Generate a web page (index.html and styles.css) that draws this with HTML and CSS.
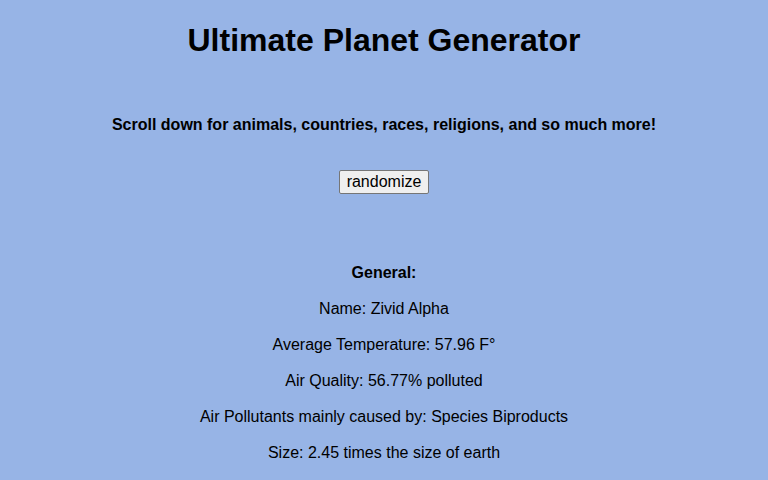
FILE: index.html
```html
<!DOCTYPE html>
<html lang="en">
<head>
<meta charset="utf-8">
<title>Ultimate Planet Generator</title>
<link rel="stylesheet" href="styles.css">
</head>
<body>
  <main class="page">
    <h1 class="title">Ultimate Planet Generator</h1>
    <p class="tagline">Scroll down for animals, countries, races, religions, and so much more!</p>
    <div class="actions">
      <button class="btn" type="button">randomize</button>
    </div>
    <section class="section">
      <h2 class="section-title">General:</h2>
      <p class="fact">Name: Zivid Alpha</p>
      <p class="fact">Average Temperature: 57.96 F°</p>
      <p class="fact">Air Quality: 56.77% polluted</p>
      <p class="fact">Air Pollutants mainly caused by: Species Biproducts</p>
      <p class="fact">Size: 2.45 times the size of earth</p>
    </section>
  </main>
</body>
</html>
```
FILE: styles.css
```css
html, body {
  margin: 0;
  padding: 0;
  background: #97b4e6;
}

body {
  font-family: "Liberation Sans", Arial, sans-serif;
  color: #000;
}

.page {
  display: flex;
  flex-direction: column;
  align-items: center;
  text-align: center;
}

.title {
  margin: 22px 0 0;
  font-size: 32px;
  line-height: 37px;
  font-weight: bold;
}

.tagline {
  margin: 57px 0 0;
  font-size: 16px;
  line-height: 18px;
  font-weight: bold;
}

.actions {
  margin-top: 36px;
}

.btn {
  font-family: "Liberation Sans", Arial, sans-serif;
  font-size: 16px;
  line-height: 18px;
  height: 24px;
  padding: 1px 7px;
  color: #000;
  background: #efefef;
  border: 1px solid #767676;
  border-radius: 2px;
}

.section {
  margin-top: 70px;
  display: flex;
  flex-direction: column;
  align-items: center;
  gap: 18px;
}

.section-title {
  margin: 0;
  font-size: 16px;
  line-height: 18px;
  font-weight: bold;
}

.fact {
  margin: 0;
  font-size: 16px;
  line-height: 18px;
}
```
